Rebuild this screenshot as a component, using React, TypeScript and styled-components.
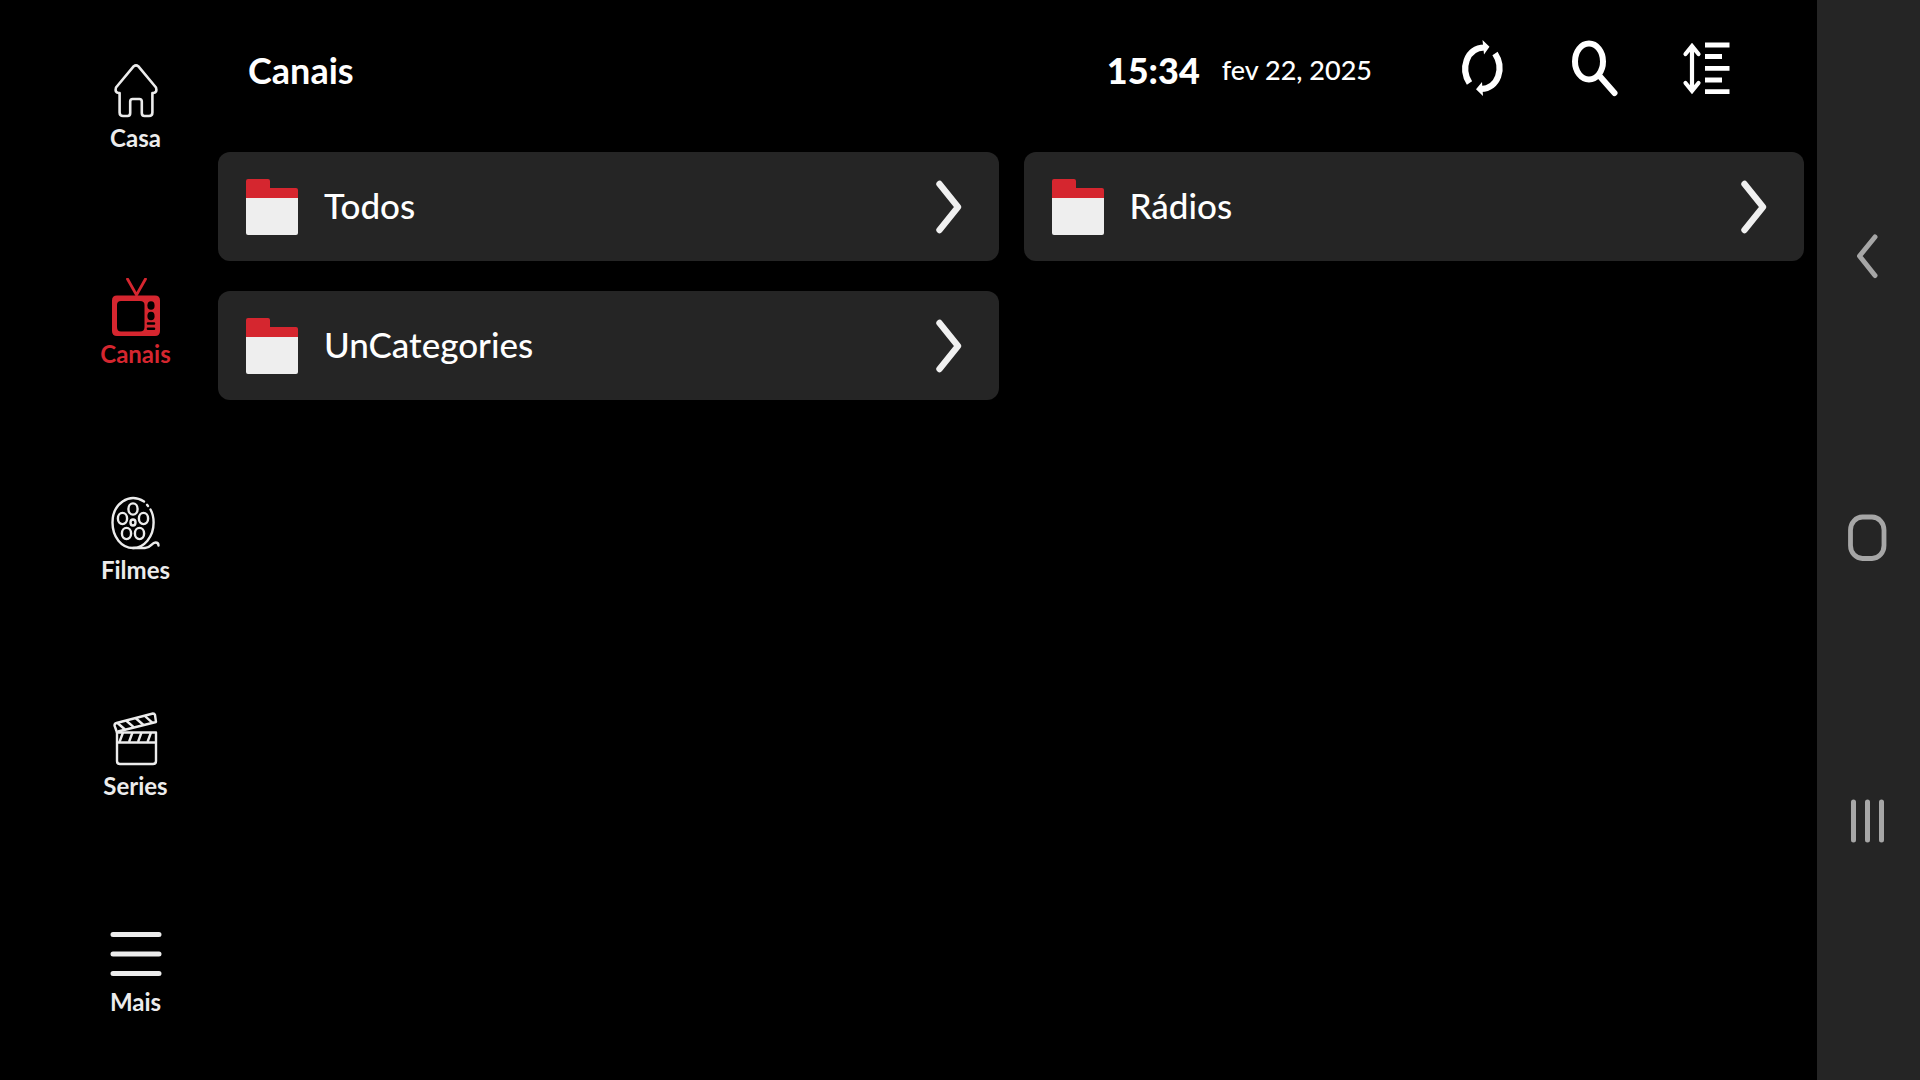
import React, { useState } from "react";
import styled, { createGlobalStyle } from "styled-components";

const color = {
  page: "#000000",
  panel: "#252525",
  text: "#ffffff",
  icon: "#ececec",
  accent: "#d5262f",
  system: "#a6a6a6",
};

const GlobalStyle = createGlobalStyle`
  * { box-sizing: border-box; }
  body {
    margin: 0;
    background: ${color.page};
    color: ${color.text};
    font-family: Lato, "Open Sans", sans-serif;
  }
  button {
    border: 0;
    padding: 0;
    background: none;
    color: inherit;
    font: inherit;
    cursor: pointer;
  }
  svg { display: block; flex: none; }
`;

const Screen = styled.div`
  display: flex;
  min-height: 100vh;
`;

const Sidebar = styled.nav`
  display: flex;
  flex-direction: column;
  flex: none;
  width: 218px;
  padding-left: 53px;
`;

const SidebarItem = styled.button<{ $active: boolean }>`
  display: flex;
  flex: 1;
  flex-direction: column;
  align-items: center;
  justify-content: center;
  color: ${(p) => (p.$active ? color.accent : color.icon)};
  font-size: 24px;
  font-weight: 700;
  line-height: 32px;
`;

const Main = styled.main`
  flex: 1;
  min-width: 0;
  padding: 0 13px 24px 0;
`;

const Header = styled.header`
  display: flex;
  align-items: center;
  height: 140px;
  padding: 0 68px 0 30px;
`;

const Title = styled.h1`
  flex: 1;
  margin: 0;
  font-size: 36px;
  font-weight: 700;
  line-height: 44px;
`;

const Clock = styled.div`
  display: flex;
  align-items: center;
  gap: 22px;
  margin-right: 80px;
`;

const Time = styled.time`
  font-size: 36px;
  font-weight: 900;
  line-height: 44px;
`;

const DateText = styled.time`
  font-size: 27px;
  font-weight: 500;
  line-height: 32px;
`;

const Actions = styled.div`
  display: flex;
  gap: 52px;
`;

const IconButton = styled.button`
  width: 60px;
  height: 60px;
`;

const CategoryGrid = styled.div`
  display: grid;
  grid-template-columns: 1fr 1fr;
  gap: 30px 25px;
  padding-top: 12px;
`;

const CategoryCard = styled.button`
  display: flex;
  align-items: center;
  gap: 26px;
  height: 109px;
  padding: 0 37px 0 28px;
  border-radius: 12px;
  background: ${color.panel};
  text-align: left;
`;

const CategoryName = styled.span`
  flex: 1;
  padding-bottom: 4px;
  font-size: 35px;
  font-weight: 500;
  line-height: 44px;
`;

const SystemBar = styled.aside`
  display: flex;
  flex: none;
  flex-direction: column;
  width: 103px;
  padding: 115px 2px 119px 0;
  background: ${color.panel};
`;

const SystemButton = styled.button`
  display: flex;
  flex: 1;
  align-items: center;
  justify-content: center;
  color: ${color.system};
`;

const HomeIcon = () => (
  <svg width="60" height="60" viewBox="0 0 60 60" fill="none" stroke="currentColor" strokeWidth="2.6" strokeLinejoin="round">
    <path d="M27.8 4.200Q30 2.400 32.200 4.200L50 25.500Q51.500 30.500 47.500 31H46.400V50.500Q46.400 54 43 54H38.500Q35.800 54 35.800 51V39.500Q35.800 37 33.300 37H26.700Q24.200 37 24.200 39.500V51Q24.200 54 21.500 54H17Q13.600 54 13.600 50.500V31H12.500Q8.500 30.500 10 25.500Z" />
  </svg>
);

const TvIcon = () => (
  <svg width="60" height="60" viewBox="0 0 60 60">
    <path d="M21.500 1L30.500 17L39.500 1" fill="none" stroke="currentColor" strokeWidth="2.800" strokeLinecap="round" />
    <path
      fill="currentColor"
      fillRule="evenodd"
      d="M11 17.500H49Q54 17.500 54 22.500V53Q54 58 49 58H11Q6 58 6 53V22.500Q6 17.500 11 17.500ZM15 23Q11 23 11 27V49Q11 53.500 15 53.500H34Q38.500 53.500 38.500 49V27Q38.500 23 34 23Z"
    />
    <ellipse cx="45" cy="27.500" rx="3.600" ry="4.300" fill="#000" />
    <ellipse cx="45" cy="38" rx="3.600" ry="4.300" fill="#000" />
    <path d="M42 45.500H48M42 50.800H48" stroke="#000" strokeWidth="2.600" strokeLinecap="round" />
  </svg>
);

const ReelIcon = () => (
  <svg width="60" height="60" viewBox="0 0 60 60" fill="none" stroke="currentColor" strokeWidth="2.400" strokeLinecap="round">
    <path d="M38 7.500C23 -2 6.500 10 6.500 28.500C6.500 43 15.500 54 27 54C38 54 47.600 43 47.600 28.500Q47.600 21 44.500 15.500" />
    <path d="M41 10.800L42 12" />
    <path d="M27 54H39C45 54 45.500 48.500 49.500 48.500Q52.500 48.500 52.500 51.500" />
    <ellipse cx="27" cy="15" rx="4.600" ry="5.600" />
    <ellipse cx="16.500" cy="24.500" rx="4.600" ry="5.600" />
    <ellipse cx="37.500" cy="24.500" rx="4.600" ry="5.600" />
    <ellipse cx="20.500" cy="39.500" rx="4.600" ry="5.600" />
    <ellipse cx="33.500" cy="39.500" rx="4.600" ry="5.600" />
    <ellipse cx="27" cy="28.500" rx="2.500" ry="3" />
  </svg>
);

const ClapperIcon = () => (
  <svg width="60" height="60" viewBox="0 0 60 60" fill="none" stroke="currentColor" strokeWidth="2.400" strokeLinejoin="round">
    <path d="M11 22.500H50V51Q50 54 47 54H14Q11 54 11 51ZM11 32.500H50" />
    <path d="M11 22.500L8.500 15.500Q8.500 13.500 10.500 13L47 3.500Q48.500 3.500 49 5L50 12L12 21.500" />
    <path d="M11.500 13L19 19.500M20 10.500L28 17.300M29.500 8L37.500 15M38.500 5.700L46.500 12.800M17 22.500L13.500 32M26.500 22.500L23 32M35.500 22.500L32 32M45 22.500L41.500 32" />
  </svg>
);

const MenuIcon = () => (
  <svg width="60" height="60" viewBox="0 0 60 60" stroke="currentColor" strokeWidth="5" strokeLinecap="round">
    <path d="M7 8.500H53M7 28H53M7 47.500H53" />
  </svg>
);

const RefreshIcon = () => (
  <svg width="60" height="60" viewBox="0 0 60 60" fill="none" stroke="currentColor" strokeWidth="6.200">
    <path d="M17.500 43C8.500 29 14 8 32.500 7.500" />
    <path d="M43 13.500C52.500 28 46.500 48.500 29 49" />
    <path d="M30.500 0L37.500 6.800L32 14.500ZM31 56L24 49.300L30 42Z" fill="currentColor" stroke="none" />
  </svg>
);

const SearchIcon = () => (
  <svg width="60" height="60" viewBox="0 0 60 60" fill="none" stroke="currentColor" strokeWidth="6" strokeLinecap="round">
    <ellipse cx="25" cy="21.500" rx="14" ry="18" />
    <path d="M36 36.500L50.500 53" />
  </svg>
);

const SortIcon = () => (
  <svg width="60" height="60" viewBox="0 0 60 60" fill="none" stroke="currentColor" strokeWidth="4.200">
    <path d="M16 7V50M9.500 14L16 6L22.500 14M9.500 43L16 51L22.500 43" strokeLinecap="round" />
    <path d="M29 5H53.500M29 16.500H46M29 28.300H53.500M29 40H46M29 51.600H53.500" strokeWidth="4.800" />
  </svg>
);

const FolderIcon = () => (
  <svg width="52" height="56" viewBox="0 0 52 56">
    <path d="M0 20V2Q0 0 2 0H22Q24 0 24 2V9H50Q52 9 52 11V20Z" fill={color.accent} />
    <path d="M0 19H52V54Q52 56 50 56H2Q0 56 0 54Z" fill="#eeeeee" />
  </svg>
);

const ChevronIcon = () => (
  <svg width="26" height="54" viewBox="0 0 26 54" fill="none" stroke="#f0f0f0" strokeWidth="6.400" strokeLinecap="round" strokeLinejoin="round">
    <path d="M3.500 4L22 27L3.500 50" />
  </svg>
);

const BackIcon = () => (
  <svg width="48" height="48" viewBox="0 0 48 48" fill="none" stroke="currentColor" strokeWidth="5" strokeLinecap="round" strokeLinejoin="round">
    <path d="M31 5L15.500 24L31 43.500" />
  </svg>
);

const HomeKeyIcon = () => (
  <svg width="48" height="48" viewBox="0 0 48 48" fill="none" stroke="currentColor" strokeWidth="4.800">
    <rect x="6.500" y="3" width="33.500" height="41.500" rx="12" ry="13" />
  </svg>
);

const RecentsIcon = () => (
  <svg width="48" height="48" viewBox="0 0 48 48" stroke="currentColor" strokeWidth="5" strokeLinecap="round">
    <path d="M9.500 6V44M23.500 6V44M37.500 6V44" />
  </svg>
);

const sections = [
  { name: "Casa", Icon: HomeIcon },
  { name: "Canais", Icon: TvIcon },
  { name: "Filmes", Icon: ReelIcon },
  { name: "Series", Icon: ClapperIcon },
  { name: "Mais", Icon: MenuIcon },
];

const categories = ["Todos", "Rádios", "UnCategories"];

export default function App() {
  const [active, setActive] = useState("Canais");

  return (
    <>
      <GlobalStyle />
      <Screen>
        <Sidebar>
          {sections.map(({ name, Icon }) => (
            <SidebarItem key={name} type="button" $active={name === active} onClick={() => setActive(name)}>
              <Icon />
              {name}
            </SidebarItem>
          ))}
        </Sidebar>
        <Main>
          <Header>
            <Title>Canais</Title>
            <Clock>
              <Time dateTime="15:34">15:34</Time>
              <DateText dateTime="2025-02-22">fev 22, 2025</DateText>
            </Clock>
            <Actions>
              <IconButton type="button" aria-label="Atualizar"><RefreshIcon /></IconButton>
              <IconButton type="button" aria-label="Buscar"><SearchIcon /></IconButton>
              <IconButton type="button" aria-label="Ordenar"><SortIcon /></IconButton>
            </Actions>
          </Header>
          <CategoryGrid>
            {categories.map((name) => (
              <CategoryCard key={name} type="button">
                <FolderIcon />
                <CategoryName>{name}</CategoryName>
                <ChevronIcon />
              </CategoryCard>
            ))}
          </CategoryGrid>
        </Main>
        <SystemBar>
          <SystemButton type="button" aria-label="Voltar"><BackIcon /></SystemButton>
          <SystemButton type="button" aria-label="Início"><HomeKeyIcon /></SystemButton>
          <SystemButton type="button" aria-label="Recentes"><RecentsIcon /></SystemButton>
        </SystemBar>
      </Screen>
    </>
  );
}
